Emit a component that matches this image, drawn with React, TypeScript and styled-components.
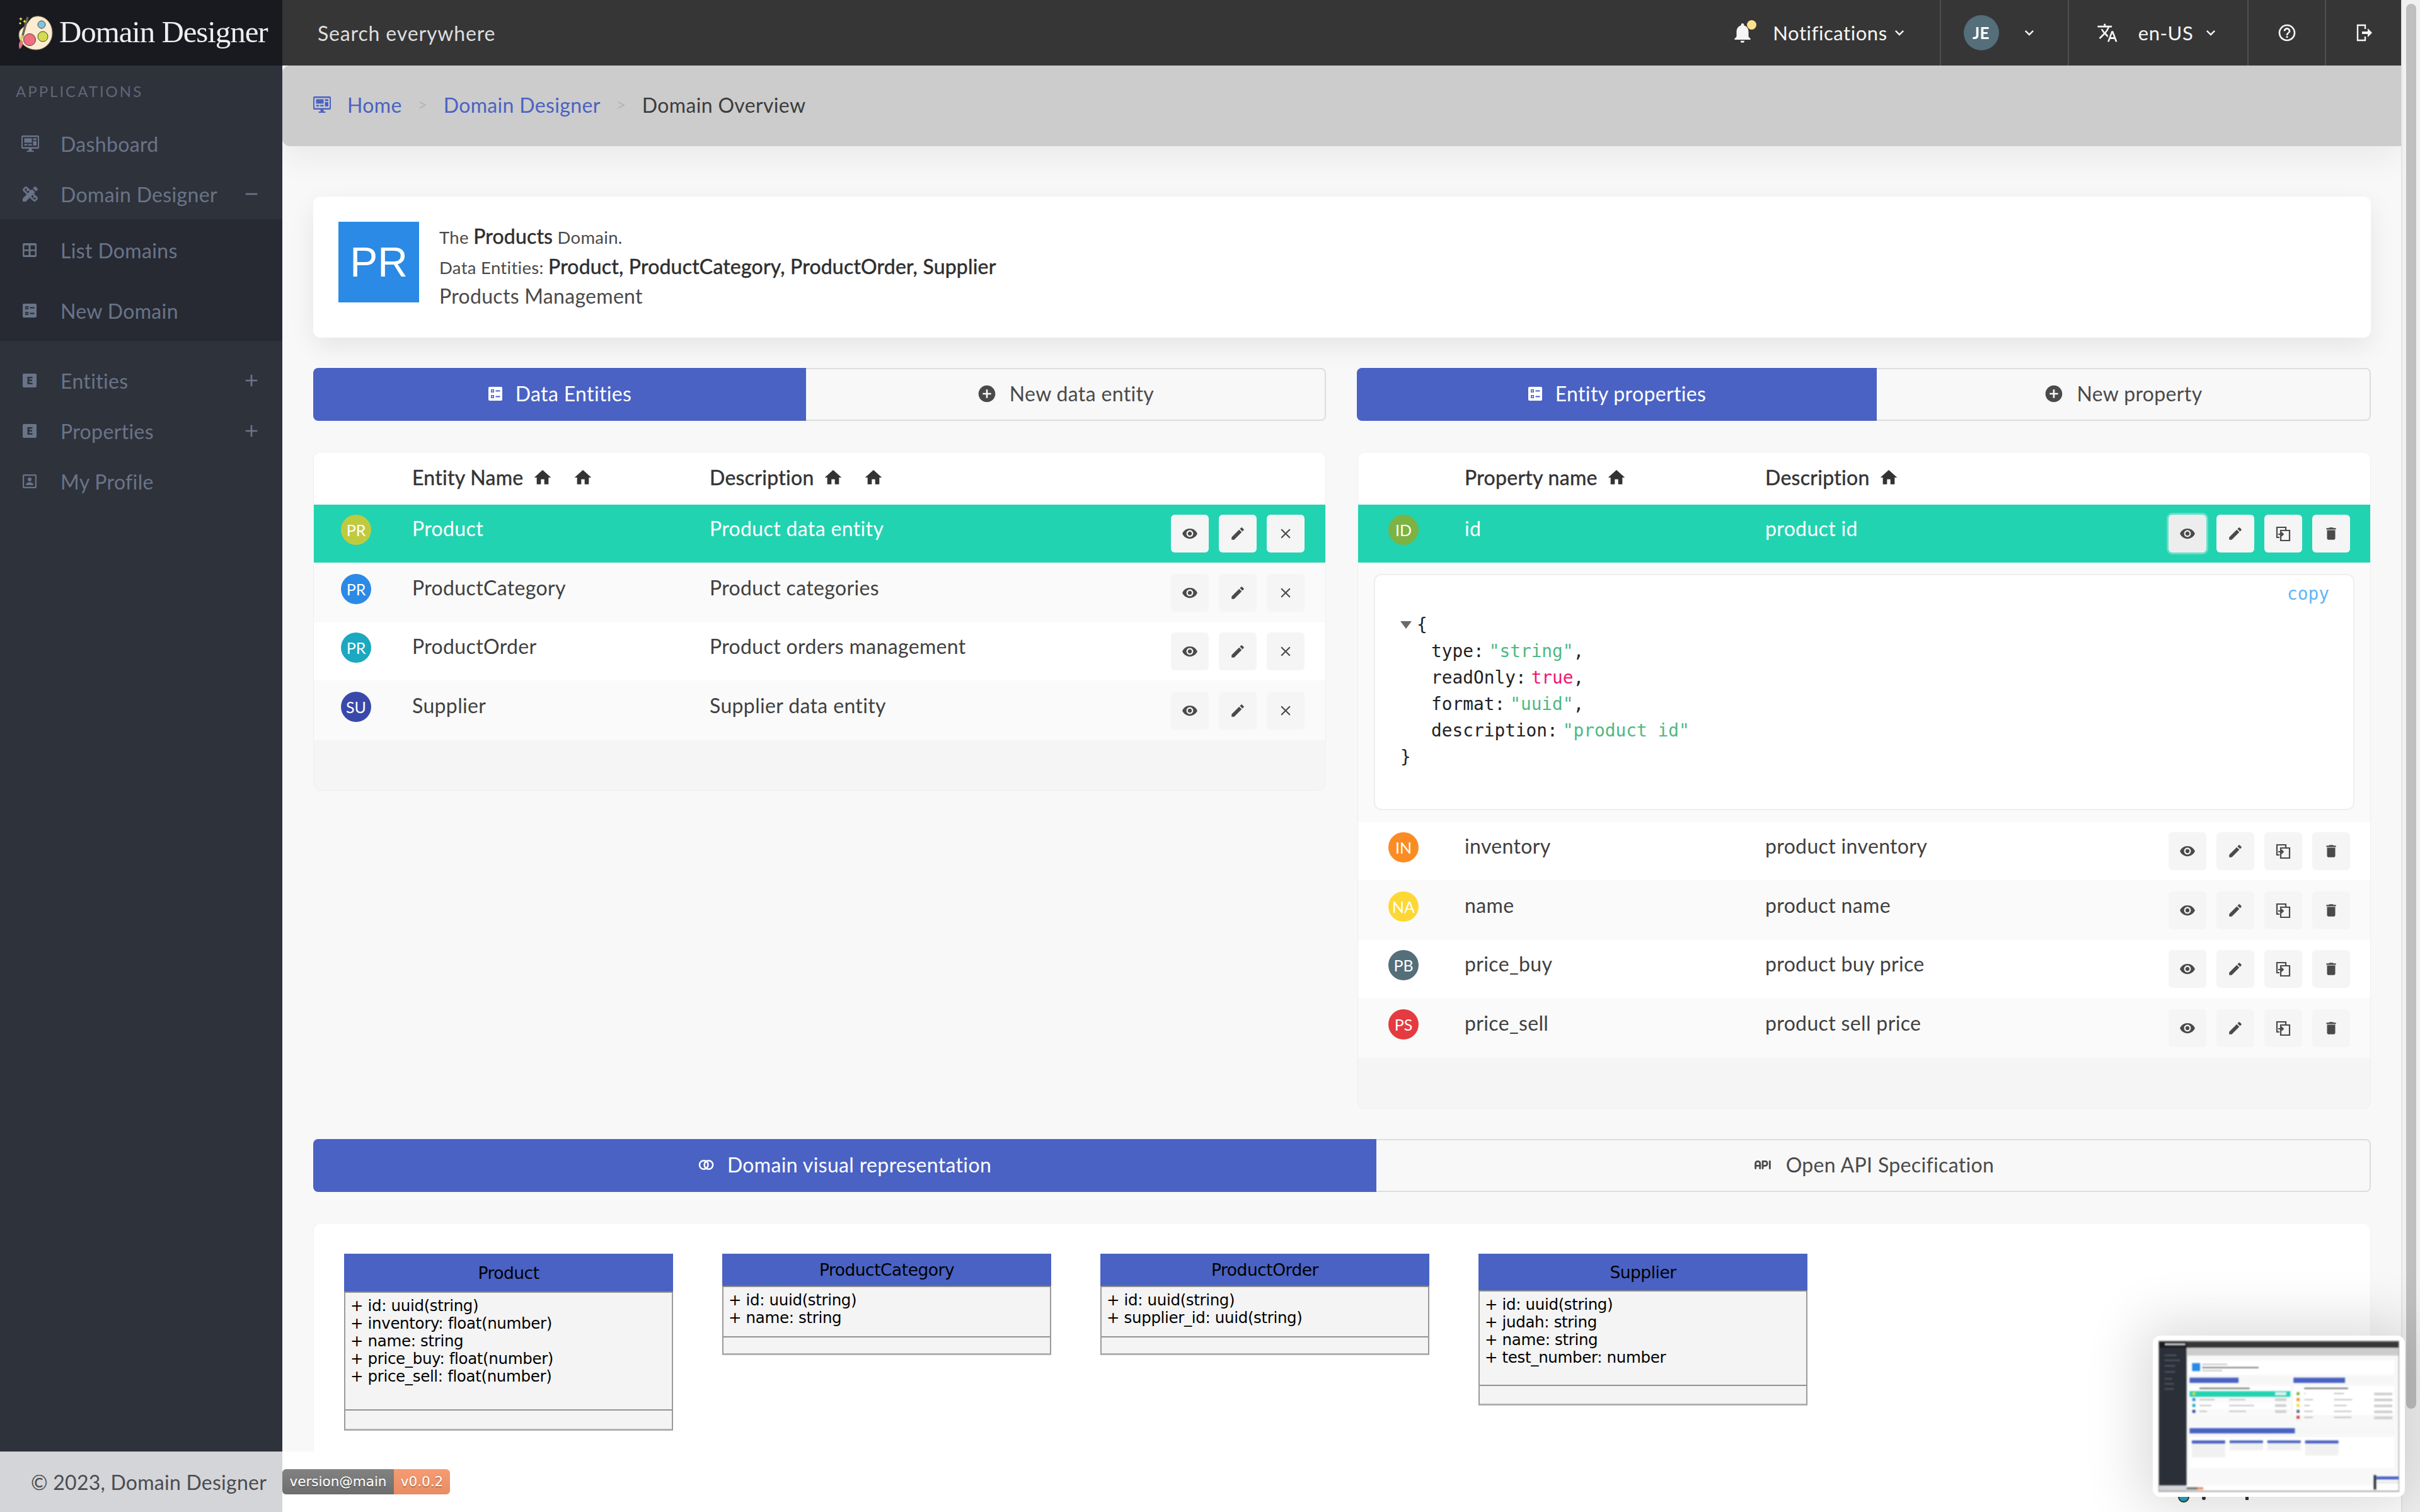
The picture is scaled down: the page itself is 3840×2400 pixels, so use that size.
import React from "react";
import styled, { createGlobalStyle } from "styled-components";
import {
  MdHome, MdEdit, MdClose, MdDelete, MdAddCircle, MdTranslate, MdNotifications,
  MdKeyboardArrowDown, MdHelpOutline, MdRemoveRedEye, MdAdd, MdRemove, MdDesignServices,
} from "react-icons/md";
import { TbApi } from "react-icons/tb";

const SANS = `"Lato", "Noto Sans", sans-serif`;
const BLUE = "#4a62c3";
const TEAL = "#22d3b1";

const Global = createGlobalStyle`
  html, body { margin: 0; padding: 0; background: #f8f8f8; }
  * { box-sizing: border-box; }
  body { font-family: ${SANS}; color: #3a3a3a; overflow: hidden; }
`;

const Page = styled.div`
  position: relative;
  width: 3840px;
  height: 2400px;
  overflow: hidden;
  display: grid;
  grid-template-columns: 448px 3362px 30px;
  grid-template-rows: 104px 2200px 96px;
`;

/* ---------- top bar ---------- */
const LogoBar = styled.div`
  background: #181a20;
  display: flex;
  align-items: center;
  padding-left: 27px;
`;
const LogoText = styled.span`
  font-family: "Liberation Serif", serif;
  font-size: 49px;
  letter-spacing: -1.1px;
  color: #eeeeee;
  margin-left: 9px;
  margin-top: -4px;
  white-space: nowrap;
`;
const TopBar = styled.header`
  background: #363636;
  display: flex;
  align-items: stretch;
  color: #fff;
`;
const SearchLabel = styled.div`
  flex: 1;
  padding-left: 56px;
  display: flex;
  align-items: center;
  font-size: 32px;
  letter-spacing: 0.85px;
  color: #dedede;
`;
const TopItem = styled.div<{ $w: number; $gap?: number; $divider?: boolean; $pr?: number }>`
  width: ${(p) => p.$w}px;
  padding-right: ${(p) => p.$pr ?? 0}px;
  display: flex;
  align-items: center;
  justify-content: center;
  gap: ${(p) => p.$gap ?? 0}px;
  font-size: 31px;
  letter-spacing: 0.55px;
  color: #f5f5f5;
  border-left: ${(p) => (p.$divider ? "2px solid #4f4f4f" : "none")};
`;
const BellWrap = styled.span`
  position: relative;
  display: inline-flex;
  font-size: 38px;
  margin-right: 9px;
`;
const BellDot = styled.span`
  position: absolute;
  right: -3px;
  top: -1px;
  width: 15px;
  height: 15px;
  border-radius: 50%;
  background: #ffdf8e;
`;
const TopGlyph = styled.span<{ $ml?: number; $mr?: number }>`
  display: flex;
  margin-left: ${(p) => p.$ml ?? 0}px;
  margin-right: ${(p) => p.$mr ?? 0}px;
`;
const UserChip = styled.span`
  width: 56px;
  height: 56px;
  border-radius: 50%;
  background: #546e7a;
  color: #fff;
  font-size: 26px;
  font-weight: 700;
  display: flex;
  align-items: center;
  justify-content: center;
`;

/* ---------- sidebar ---------- */
const Sidebar = styled.nav`
  background: #2e323b;
  display: flex;
  flex-direction: column;
  color: #6a7488;
`;
const SideLabel = styled.div`
  height: 84px;
  padding: 26px 0 0 25px;
  font-size: 24px;
  line-height: 30px;
  letter-spacing: 3px;
  color: #5f6777;
`;
const SideItem = styled.div<{ $h?: number; $mt?: number }>`
  height: ${(p) => p.$h ?? 80}px;
  margin-top: ${(p) => p.$mt ?? 0}px;
  display: grid;
  grid-template-columns: 96px 1fr 65px;
  align-items: center;
  font-size: 32px;
  letter-spacing: 0.35px;
  svg { display: block; }
`;
const SideIcon = styled.span<{ $pl?: number }>`
  padding-left: ${(p) => p.$pl ?? 35}px;
  display: flex;
`;
const SideGroup = styled.div`
  background: #272a33;
  border-top: 1px solid #272a33;
`;
const SideToggle = styled.span`
  font-size: 32px;
  display: flex;
`;
const SideFoot = styled.div`
  background: #d4d5d8;
  display: flex;
  align-items: center;
  padding: 0 0 0 49px;
  font-size: 32px;
  letter-spacing: 0.25px;
  color: #4a4c50;
  white-space: nowrap;
`;

/* ---------- main ---------- */
const Main = styled.main`
  overflow: hidden;
  background: #f8f8f8;
  display: flex;
  flex-direction: column;
`;
const Crumbs = styled.div`
  height: 128px;
  flex: none;
  background: #cccccc;
  border-radius: 12px 0 0 12px;
  box-shadow: 0 20px 50px rgba(0, 0, 0, 0.06);
  display: flex;
  align-items: center;
  padding: 0 0 4px 48px;
  font-size: 32px;
  letter-spacing: 0.35px;
  color: #3c3c3c;
`;
const CrumbIcon = styled.span`
  color: ${BLUE};
  display: flex;
  width: 55px;
`;
const CrumbLink = styled.span`
  color: ${BLUE};
`;
const CrumbSep = styled.span<{ $w: number }>`
  width: ${(p) => p.$w}px;
  text-align: center;
  color: #b5b5b5;
  font-size: 26px;
`;
const Content = styled.div`
  padding: 80px 48px 0 49px;
  display: flex;
  flex-direction: column;
`;
const DomainCard = styled.section`
  height: 224px;
  background: #fff;
  border-radius: 12px;
  box-shadow: 0 14px 40px rgba(0, 0, 0, 0.08);
  padding: 40px;
  display: flex;
  gap: 32px;
  margin-bottom: 48px;
`;
const DomainBadge = styled.div`
  width: 128px;
  height: 128px;
  flex: none;
  background: #2a8ae6;
  color: #fff;
  display: flex;
  align-items: center;
  justify-content: center;
  font-family: "Liberation Sans", sans-serif;
  font-size: 66px;
`;
const DomainLines = styled.div`
  display: flex;
  flex-direction: column;
  margin-top: -1px;
`;
const DomainLine = styled.div<{ $size: number }>`
  height: 47.5px;
  line-height: 47.5px;
  font-size: ${(p) => p.$size}px;
  letter-spacing: 0.3px;
  color: #4a4a4a;
  white-space: nowrap;
`;
const Strong = styled.b`
  font-size: 32px;
  font-weight: 400;
  letter-spacing: 0.2px;
  color: #2e2e2e;
  -webkit-text-stroke: 0.5px #2e2e2e;
`;
const Columns = styled.div`
  display: grid;
  grid-template-columns: 1607px 1609px;
  gap: 49px;
  align-items: start;
`;
const Tabs = styled.div<{ $cols: string; $mb?: number; $mt?: number }>`
  display: grid;
  grid-template-columns: ${(p) => p.$cols};
  height: 84px;
  margin-top: ${(p) => p.$mt ?? 0}px;
  margin-bottom: ${(p) => p.$mb ?? 49}px;
`;
const Tab = styled.div<{ $active?: boolean }>`
  display: flex;
  align-items: center;
  justify-content: center;
  gap: 20px;
  padding-bottom: 3px;
  font-size: 32px;
  letter-spacing: 0.35px;
  color: ${(p) => (p.$active ? "#fff" : "#4a4a4a")};
  background: ${(p) => (p.$active ? BLUE : "#f8f8f8")};
  border-radius: ${(p) => (p.$active ? "8px 0 0 8px" : "0 8px 8px 0")};
  border: ${(p) => (p.$active ? "none" : "2px solid #dddddd")};
  border-left: none;
  svg { display: block; }
`;
const TableCard = styled.section<{ $h: number; $ml?: number }>`
  height: ${(p) => p.$h}px;
  margin-left: ${(p) => p.$ml ?? 0}px;
  background: #f5f5f5;
  border: 1px solid #efefef;
  border-radius: 12px;
  overflow: hidden;
`;
const HeadRow = styled.div<{ $cols: string }>`
  height: 83px;
  padding-bottom: 4px;
  background: #fff;
  display: grid;
  grid-template-columns: ${(p) => p.$cols};
  align-items: center;
  font-size: 32px;
  letter-spacing: 0.3px;
  color: #333333;
  -webkit-text-stroke: 0.45px #333333;
`;
const HeadCell = styled.div`
  display: flex;
  align-items: center;
  white-space: nowrap;
  svg { margin-left: 14px; }
  svg + svg { margin-left: 32px; }
`;
const Row = styled.div<{ $cols: string; $selected?: boolean; $striped?: boolean; $pr: number }>`
  height: ${(p) => (p.$striped ? 95 : 92)}px;
  padding: ${(p) => (p.$striped ? 18 : 16)}px ${(p) => p.$pr}px 0 0;
  display: grid;
  grid-template-columns: ${(p) => p.$cols};
  align-items: start;
  font-size: 32px;
  line-height: 44px;
  letter-spacing: 0.35px;
  background: ${(p) => (p.$selected ? TEAL : p.$striped ? "#fafafa" : "#fff")};
  color: ${(p) => (p.$selected ? "#fff" : "#404040")};
`;
const Avatar = styled.span<{ $bg: string; $ml: number }>`
  width: 48px;
  height: 48px;
  margin-left: ${(p) => p.$ml}px;
  border-radius: 50%;
  background: ${(p) => p.$bg};
  color: #fff;
  font-size: 25px;
  font-weight: 400;
  letter-spacing: 0;
  display: flex;
  align-items: center;
  justify-content: center;
`;
const Actions = styled.div`
  display: flex;
  gap: 16px;
`;
const ActionBtn = styled.span<{ $focus?: boolean }>`
  width: 60px;
  height: 60px;
  border-radius: 6px;
  background: ${(p) => (p.$focus ? "#ededed" : "#f5f5f5")};
  box-shadow: ${(p) => (p.$focus ? "0 0 0 3px rgba(255,255,255,.3)" : "none")};
  color: #4a4a4a;
  display: flex;
  align-items: center;
  justify-content: center;
  font-size: 26px;
`;
const Detail = styled.div`
  height: 412px;
  background: #fafafa;
  border-top: 2px solid #fff;
  padding: 16px 25px 0 25px;
`;
const CodeCard = styled.div`
  height: 375px;
  background: #fff;
  border: 2px solid #eeeeee;
  border-radius: 12px;
  padding: 9px 38px 0 40px;
  font-family: "DejaVu Sans Mono", monospace;
  font-size: 27.8px;
  line-height: 42px;
  color: #222;
`;
const CopyLink = styled.div`
  text-align: right;
  color: #5fb6f7;
  height: 49px;
`;
const CodeLine = styled.div<{ $indent?: boolean }>`
  padding-left: ${(p) => (p.$indent ? 49 : 0)}px;
  white-space: pre;
  display: flex;
  align-items: center;
`;
const Caret = styled.span`
  width: 0;
  height: 0;
  border-left: 9px solid transparent;
  border-right: 9px solid transparent;
  border-top: 12px solid #6a6a6a;
  margin-right: 8px;
`;
const Key = styled.span`
  margin-right: 8px;
`;
const Str = styled.span`
  color: #4fb884;
`;
const Bool = styled.span`
  color: #f2166f;
`;

/* ---------- UML ---------- */
const DiagramCard = styled.section`
  background: #fff;
  border: 1px solid #f2f2f2;
  border-radius: 12px 12px 0 0;
  height: 420px;
  padding: 48px 48px 0 48px;
  display: flex;
  gap: 78px;
  align-items: flex-start;
`;
const UmlBox = styled.div`
  width: 522px;
  flex: none;
  border: 2px solid #9a9a9a;
  border-bottom-width: 3px;
  border-bottom-color: #b0b0b0;
  background: #f4f4f4;
  color: #000;
  font-family: "DejaVu Sans", sans-serif;
`;
const UmlHead = styled.div<{ $h: number }>`
  height: ${(p) => p.$h}px;
  background: ${BLUE};
  border-bottom: 2px solid #8e8e8e;
  margin: -2px -2px 0 -2px;
  display: flex;
  align-items: center;
  justify-content: center;
  font-size: 26.5px;
  letter-spacing: -0.5px;
`;
const UmlBody = styled.div<{ $h: number }>`
  height: ${(p) => p.$h}px;
  padding: 7px 0 0 8px;
  border-bottom: 2px solid #929292;
  font-size: 24.5px;
  line-height: 28px;
  letter-spacing: -0.35px;
`;
const UmlFoot = styled.div<{ $h: number }>`
  height: ${(p) => p.$h}px;
`;

/* ---------- footer / overlays ---------- */
const MainFoot = styled.div`
  background: #fff;
  display: flex;
  align-items: center;
`;
const Badge = styled.div`
  display: flex;
  height: 40px;
  font-family: "DejaVu Sans", sans-serif;
  font-size: 21.5px;
  line-height: 40px;
  color: #fff;
  text-shadow: 0 2px 1px rgba(0, 0, 0, 0.25);
  border-radius: 6px;
  overflow: hidden;
`;
const BadgeLeft = styled.span`
  width: 177px;
  text-align: center;
  background: linear-gradient(#828282, #6d6d6d);
`;
const BadgeRight = styled.span`
  width: 89px;
  text-align: center;
  background: linear-gradient(#f69b72, #e88c63);
`;
const ScrollTrack = styled.div`
  grid-column: 3;
  grid-row: 1 / 4;
  background: #f1f1f1;
  border-left: 2px solid #e4e4e4;
  padding: 6px 6px 0 6px;
`;
const ScrollThumb = styled.div`
  height: 2230px;
  background: #bfbfbf;
  border-radius: 8px;
`;
const MiniMap = styled.div`
  position: absolute;
  left: 3416px;
  top: 2120px;
  width: 400px;
  height: 256px;
  background: #fff;
  border-radius: 12px;
  padding: 8px 9px;
  box-shadow: 0 0 90px 20px rgba(0, 0, 0, 0.14);
  svg { display: block; filter: blur(1.1px); }
`;
const MiniPeek = styled.svg`
  position: absolute;
  left: 3450px;
  top: 2376px;
`;

/* ---------- icons ---------- */
const LogoMark = () => (
  <svg width="58" height="60" viewBox="0 0 58 60">
    <path d="M30 4c14-2 26 10 26 26S44 57 30 57 3 46 3 33C3 25 9 22 13 19c5-4 7-14 17-15z" fill="#fdeccf" stroke="#8c7a5c" strokeWidth="1" />
    <circle cx="39" cy="17" r="6" fill="#7cc4e6" stroke="#444" strokeWidth="1" />
    <circle cx="41" cy="36" r="8" fill="#d2dc4c" stroke="#444" strokeWidth="1" />
    <circle cx="20" cy="41" r="9.5" fill="#f26d80" stroke="#444" strokeWidth="1" />
    <path d="M17 5L8 38" stroke="#6b6358" strokeWidth="3.5" />
    <path d="M8 34l-1.5 8" stroke="#d2dc4c" strokeWidth="4" />
    <path d="M6 42c-3 3-4 8-2 14 4-3 6-8 5-13z" fill="#e8707f" />
    <path d="M6 5l1 2 2 1-2 1-1 2-1-2-2-1 2-1zM12 9l1 2 2 1-2 1-1 2-1-2-2-1 2-1zM5 13l1 1 1 1-1 1-1 1-1-1-1-1 1-1z" fill="#e6dc4a" />
  </svg>
);
const IconMonitor = ({ size = 30 }: { size?: number }) => (
  <svg width={size} height={size} viewBox="0 0 30 30" fill="currentColor">
    <path fillRule="evenodd" d="M3 2h24a2 2 0 0 1 2 2v17a2 2 0 0 1-2 2H3a2 2 0 0 1-2-2V4a2 2 0 0 1 2-2zm0 2.4V20.6h24V4.4z" />
    <rect x="5.5" y="6.5" width="12" height="7" />
    <rect x="19.5" y="6.5" width="5.5" height="3" />
    <rect x="19.5" y="11" width="5.5" height="7" />
    <rect x="5.5" y="15.5" width="5" height="2.5" />
    <rect x="12" y="15.5" width="5.500" height="2.5" />
    <rect x="12.5" y="23" width="5" height="3" />
    <rect x="9.5" y="26" width="11" height="2" />
  </svg>
);
const IconGrid = ({ size = 24 }: { size?: number }) => (
  <svg width={size} height={size} viewBox="0 0 24 24" fill="currentColor">
    <path fillRule="evenodd" d="M3 1h18a2 2 0 0 1 2 2v18a2 2 0 0 1-2 2H3a2 2 0 0 1-2-2V3a2 2 0 0 1 2-2zm.5 3.500v6.500h7V4.500zm10 0v6.500h7V4.500zm-10 9v6.500h7V13.500zm10 0v6.500h7V13.500z" />
  </svg>
);
const IconForm = ({ size = 24 }: { size?: number }) => (
  <svg width={size} height={size} viewBox="0 0 24 24" fill="currentColor">
    <path fillRule="evenodd" d="M3 1h18a2 2 0 0 1 2 2v18a2 2 0 0 1-2 2H3a2 2 0 0 1-2-2V3a2 2 0 0 1 2-2zm2 4v5h5V5zm1.500 1.500h2v2h-2zM5 14v5h5v-5zm1.500 1.500h2v2h-2zM12.500 6.500v2h7v-2zm0 9v2h7v-2z" />
  </svg>
);
const IconEntity = () => (
  <svg width="24" height="24" viewBox="0 0 24 24" fill="currentColor">
    <path fillRule="evenodd" d="M3 1h18a2 2 0 0 1 2 2v18a2 2 0 0 1-2 2H3a2 2 0 0 1-2-2V3a2 2 0 0 1 2-2zm5.500 5v12h8v-2.500H11.500V13h4.500v-2.500H11.500V8.500h5V6z" />
  </svg>
);
const IconProfile = () => (
  <svg width="24" height="24" viewBox="0 0 24 24" fill="currentColor">
    <path fillRule="evenodd" d="M3 1h18a2 2 0 0 1 2 2v18a2 2 0 0 1-2 2H3a2 2 0 0 1-2-2V3a2 2 0 0 1 2-2zm.2 2.200v17.600h17.600V3.200z" />
    <circle cx="12" cy="9" r="3" />
    <path d="M6 18c0-3 3-4.500 6-4.500s6 1.500 6 4.500z" />
  </svg>
);
const IconLogout = () => (
  <svg width="30" height="30" viewBox="0 0 30 30" fill="none" stroke="currentColor" strokeWidth="2.4">
    <path d="M17 9V3H5v24h12v-6" />
    <path d="M12 13h9V8l7 7-7 7v-5h-9z" fill="currentColor" stroke="none" />
  </svg>
);
const IconRings = () => (
  <svg width="26" height="22" viewBox="0 0 30 26" fill="none" stroke="currentColor" strokeWidth="3">
    <circle cx="10" cy="13" r="8" />
    <circle cx="19" cy="13" r="8" />
  </svg>
);
const IconCopy = () => (
  <svg width="26" height="26" viewBox="0 0 26 26" fill="none" stroke="currentColor" strokeWidth="2.2">
    <path d="M7 19H3V3h14v5" />
    <path d="M9 8h14v16H9z" />
    <path d="M5 14h8m-3-3l3 3-3 3" strokeWidth="1.8" />
  </svg>
);

const homeIcon = <MdHome size={32} />;

/* ---------- data ---------- */
const LEFT_COLS = "156px 472px 1fr auto";
const RIGHT_COLS = "169px 477px 1fr auto";

const entities = [
  { code: "PR", bg: "#c0ca3f", name: "Product", desc: "Product data entity", selected: true },
  { code: "PR", bg: "#2a8ae6", name: "ProductCategory", desc: "Product categories", striped: true },
  { code: "PR", bg: "#1ca8c0", name: "ProductOrder", desc: "Product orders management" },
  { code: "SU", bg: "#3949ab", name: "Supplier", desc: "Supplier data entity", striped: true },
];
const props = [
  { code: "IN", bg: "#fb8c24", name: "inventory", desc: "product inventory" },
  { code: "NA", bg: "#fdd835", name: "name", desc: "product name", striped: true },
  { code: "PB", bg: "#546e7a", name: "price_buy", desc: "product buy price" },
  { code: "PS", bg: "#e53a3f", name: "price_sell", desc: "product sell price", striped: true },
];
const uml = [
  { title: "Product", head: 62, body: 187, foot: 29, lines: ["+ id: uuid(string)", "+ inventory: float(number)", "+ name: string", "+ price_buy: float(number)", "+ price_sell: float(number)"] },
  { title: "ProductCategory", head: 53, body: 80, foot: 25, lines: ["+ id: uuid(string)", "+ name: string"] },
  { title: "ProductOrder", head: 53, body: 80, foot: 25, lines: ["+ id: uuid(string)", "+ supplier_id: uuid(string)"] },
  { title: "Supplier", head: 60, body: 150, foot: 28, lines: ["+ id: uuid(string)", "+ judah: string", "+ name: string", "+ test_number: number"] },
];

/* miniature page, a drawing: [x, y, w, h, colour] in page coordinates */
const miniRects: [number, number, number, number, string][] = [
  [0, 0, 3840, 2400, "#f8f8f8"],
  [0, 0, 3840, 104, "#363636"],
  [0, 0, 448, 104, "#181a20"],
  [0, 104, 448, 2200, "#2b2f38"],
  [448, 104, 3392, 128, "#cccccc"],
  [496, 312, 3266, 224, "#ffffff"],
  [536, 352, 128, 128, "#2a8ae6"],
  [696, 365, 400, 14, "#aaaaaa"], [696, 415, 900, 16, "#555555"], [696, 465, 320, 14, "#aaaaaa"],
  [496, 584, 782, 84, BLUE], [1278, 584, 826, 84, "#f6f6f6"],
  [2153, 584, 825, 84, BLUE], [2978, 584, 784, 84, "#f6f6f6"],
  [496, 717, 1608, 460, "#ffffff"], [2153, 717, 1608, 460, "#ffffff"],
  [496, 800, 1608, 92, TEAL],
  [654, 745, 800, 20, "#666666"], [2324, 745, 700, 20, "#666666"],
  [496, 892, 1608, 96, "#fafafa"], [496, 1080, 1608, 96, "#fafafa"],
  [541, 816, 48, 48, "#dcd84a"], [541, 910, 48, 48, "#2a8ae6"], [541, 1004, 48, 48, "#1ca8c0"], [541, 1098, 48, 48, "#3949ab"],
  [2203, 816, 48, 48, "#7cb342"], [2203, 910, 48, 48, "#fb8c24"], [2203, 1004, 48, 48, "#fdd835"], [2203, 1098, 48, 48, "#546e7a"], [2203, 1192, 48, 48, "#e53a3f"],
  [654, 928, 240, 14, "#aaaaaa"], [654, 1022, 190, 14, "#aaaaaa"], [654, 1116, 120, 14, "#aaaaaa"],
  [1126, 928, 260, 14, "#aaaaaa"], [1126, 1022, 400, 14, "#aaaaaa"], [1126, 1116, 270, 14, "#aaaaaa"],
  [1860, 815, 180, 50, "#f0f0f0"], [1860, 915, 180, 40, "#cccccc"], [1860, 1010, 180, 40, "#cccccc"], [1860, 1105, 180, 40, "#cccccc"],
  [2324, 830, 20, 14, "#aaaaaa"], [2324, 928, 140, 14, "#aaaaaa"], [2324, 1022, 90, 14, "#aaaaaa"], [2324, 1116, 140, 14, "#aaaaaa"], [2324, 1210, 140, 14, "#aaaaaa"],
  [2800, 830, 160, 14, "#aaaaaa"], [2800, 928, 290, 14, "#aaaaaa"], [2800, 1022, 200, 14, "#aaaaaa"], [2800, 1116, 280, 14, "#aaaaaa"], [2800, 1210, 280, 14, "#aaaaaa"],
  [3440, 825, 290, 40, "#cccccc"], [3440, 920, 290, 40, "#cccccc"], [3440, 1015, 290, 40, "#cccccc"], [3440, 1110, 290, 40, "#cccccc"], [3440, 1205, 290, 40, "#cccccc"],
  [496, 1390, 1682, 84, BLUE], [2178, 1390, 1584, 84, "#f6f6f6"],
  [496, 1536, 3266, 494, "#ffffff"],
  [532, 1586, 532, 270, "#f1f1f1"], [532, 1586, 532, 50, BLUE],
  [1135, 1586, 531, 160, "#f1f1f1"], [1135, 1586, 531, 42, BLUE],
  [1737, 1586, 532, 160, "#f1f1f1"], [1737, 1586, 532, 42, BLUE],
  [2339, 1586, 532, 240, "#f1f1f1"], [2339, 1586, 532, 48, BLUE],
  [0, 2304, 448, 96, "#d4d5d8"], [448, 2304, 3392, 96, "#ffffff"],
  [448, 2332, 177, 40, "#777777"], [625, 2332, 89, 40, "#ee9068"],
  [3433, 2138, 407, 232, "#ffffff"], [3433, 2138, 40, 232, "#2b2f38"], [3473, 2160, 367, 50, BLUE], [3473, 2240, 367, 30, "#e6e6e6"],
];
const sideBars: [number, number][] = [[228, 190], [308, 250], [396, 170], [492, 170], [603, 120], [683, 150], [764, 150]];

const Actionset = ({ withCopy, focusFirst }: { withCopy?: boolean; focusFirst?: boolean }) => (
  <Actions>
    <ActionBtn $focus={focusFirst}><MdRemoveRedEye /></ActionBtn>
    <ActionBtn><MdEdit /></ActionBtn>
    {withCopy && <ActionBtn><IconCopy /></ActionBtn>}
    <ActionBtn>{withCopy ? <MdDelete /> : <MdClose />}</ActionBtn>
  </Actions>
);

export default function App() {
  return (
    <Page>
      <Global />
      <LogoBar>
        <LogoMark />
        <LogoText>Domain Designer</LogoText>
      </LogoBar>
      <TopBar>
        <SearchLabel>Search everywhere</SearchLabel>
        <TopItem $w={338} $gap={20} $pr={44}>
          <BellWrap><MdNotifications /><BellDot /></BellWrap>
          Notifications
          <TopGlyph $ml={-15}><MdKeyboardArrowDown size={28} /></TopGlyph>
        </TopItem>
        <TopItem $w={203} $gap={34} $pr={12} $divider>
          <UserChip>JE</UserChip>
          <MdKeyboardArrowDown size={28} />
        </TopItem>
        <TopItem $w={285} $gap={20} $divider>
          <TopGlyph $mr={12}><MdTranslate size={34} /></TopGlyph>
          en-US
          <TopGlyph $ml={-6}><MdKeyboardArrowDown size={28} /></TopGlyph>
        </TopItem>
        <TopItem $w={123} $divider><MdHelpOutline size={32} /></TopItem>
        <TopItem $w={121} $divider><IconLogout /></TopItem>
      </TopBar>

      <Sidebar>
        <SideLabel>APPLICATIONS</SideLabel>
        <SideItem><SideIcon $pl={33}><IconMonitor /></SideIcon>Dashboard</SideItem>
        <SideItem><SideIcon $pl={32}><MdDesignServices size={32} /></SideIcon>Domain Designer<SideToggle><MdRemove /></SideToggle></SideItem>
        <SideGroup>
          <SideItem $h={96}><SideIcon><IconGrid /></SideIcon>List Domains</SideItem>
          <SideItem $h={96}><SideIcon><IconForm /></SideIcon>New Domain</SideItem>
        </SideGroup>
        <SideItem $mt={23}><SideIcon><IconEntity /></SideIcon>Entities<SideToggle><MdAdd /></SideToggle></SideItem>
        <SideItem><SideIcon><IconEntity /></SideIcon>Properties<SideToggle><MdAdd /></SideToggle></SideItem>
        <SideItem><SideIcon><IconProfile /></SideIcon>My Profile</SideItem>
      </Sidebar>

      <Main>
        <Crumbs>
          <CrumbIcon><IconMonitor /></CrumbIcon>
          <CrumbLink>Home</CrumbLink>
          <CrumbSep $w={66}>&gt;</CrumbSep>
          <CrumbLink>Domain Designer</CrumbLink>
          <CrumbSep $w={66}>&gt;</CrumbSep>
          Domain Overview
        </Crumbs>
        <Content>
          <DomainCard>
            <DomainBadge>PR</DomainBadge>
            <DomainLines>
              <DomainLine $size={27.5}>The <Strong>Products</Strong> Domain.</DomainLine>
              <DomainLine $size={27.5}>Data Entities: <Strong>Product, ProductCategory, ProductOrder, Supplier</Strong></DomainLine>
              <DomainLine $size={32}>Products Management</DomainLine>
            </DomainLines>
          </DomainCard>
          <Columns>
            <div>
              <Tabs $cols="782px 825px">
                <Tab $active><IconForm size={24} />Data Entities</Tab>
                <Tab><MdAddCircle size={32} />New data entity</Tab>
              </Tabs>
              <TableCard $h={538}>
                <HeadRow $cols={LEFT_COLS}>
                  <span />
                  <HeadCell>Entity Name{homeIcon}{homeIcon}</HeadCell>
                  <HeadCell>Description{homeIcon}{homeIcon}</HeadCell>
                </HeadRow>
                {entities.map((e) => (
                  <Row key={e.name} $cols={LEFT_COLS} $selected={e.selected} $striped={e.striped} $pr={33}>
                    <Avatar $bg={e.bg} $ml={43}>{e.code}</Avatar>
                    <span>{e.name}</span>
                    <span>{e.desc}</span>
                    <Actionset />
                  </Row>
                ))}
              </TableCard>
            </div>
            <div>
              <Tabs $cols="825px 784px">
                <Tab $active><IconForm size={24} />Entity properties</Tab>
                <Tab><MdAddCircle size={32} />New property</Tab>
              </Tabs>
              <TableCard $h={1043} $ml={1}>
                <HeadRow $cols={RIGHT_COLS}>
                  <span />
                  <HeadCell>Property name{homeIcon}</HeadCell>
                  <HeadCell>Description{homeIcon}</HeadCell>
                </HeadRow>
                <Row $cols={RIGHT_COLS} $selected $pr={32}>
                  <Avatar $bg="#7cb342" $ml={48}>ID</Avatar>
                  <span>id</span>
                  <span>product id</span>
                  <Actionset withCopy focusFirst />
                </Row>
                <Detail>
                  <CodeCard>
                    <CopyLink>copy</CopyLink>
                    <CodeLine><Caret />{"{"}</CodeLine>
                    <CodeLine $indent><Key>type:</Key><Str>"string"</Str>,</CodeLine>
                    <CodeLine $indent><Key>readOnly:</Key><Bool>true</Bool>,</CodeLine>
                    <CodeLine $indent><Key>format:</Key><Str>"uuid"</Str>,</CodeLine>
                    <CodeLine $indent><Key>description:</Key><Str>"product id"</Str></CodeLine>
                    <CodeLine>{"}"}</CodeLine>
                  </CodeCard>
                </Detail>
                {props.map((e) => (
                  <Row key={e.name} $cols={RIGHT_COLS} $striped={e.striped} $pr={32}>
                    <Avatar $bg={e.bg} $ml={48}>{e.code}</Avatar>
                    <span>{e.name}</span>
                    <span>{e.desc}</span>
                    <Actionset withCopy />
                  </Row>
                ))}
              </TableCard>
            </div>
          </Columns>
          <Tabs $cols="1687px 1578px" $mt={48}>
            <Tab $active><IconRings />Domain visual representation</Tab>
            <Tab><TbApi size={34} />Open API Specification</Tab>
          </Tabs>
          <DiagramCard>
            {uml.map((u) => (
              <UmlBox key={u.title}>
                <UmlHead $h={u.head}>{u.title}</UmlHead>
                <UmlBody $h={u.body}>
                  {u.lines.map((l) => <div key={l}>{l}</div>)}
                </UmlBody>
                <UmlFoot $h={u.foot} />
              </UmlBox>
            ))}
          </DiagramCard>
        </Content>
      </Main>

      <ScrollTrack><ScrollThumb /></ScrollTrack>

      <SideFoot>© 2023, Domain Designer</SideFoot>
      <MainFoot>
        <Badge>
          <BadgeLeft>version@main</BadgeLeft>
          <BadgeRight>v0.0.2</BadgeRight>
        </Badge>
      </MainFoot>

      <MiniPeek width="130" height="10" viewBox="0 0 130 10">
        <circle cx="15" cy="0" r="8" fill="#1ca8c0" stroke="#333" strokeWidth="2" />
        <circle cx="47" cy="2" r="3" fill="#333" />
        <rect x="113" y="0" width="5" height="5" fill="#333" />
      </MiniPeek>
      <MiniMap>
        <svg width="382" height="240" viewBox="0 0 3840 2400">
          {miniRects.map(([x, y, w, h, c], i) => <rect key={i} x={x} y={y} width={w} height={h} fill={c} />)}
          {sideBars.map(([y, w]) => <rect key={y} x={97} y={y - 8} width={w} height={16} fill="#5c6575" />)}
          <rect x="100" y="35" width="330" height="34" fill="#cccccc" />
          <rect x="1" y="1" width="3838" height="2398" fill="none" stroke="#999" strokeWidth="20" />
        </svg>
      </MiniMap>
    </Page>
  );
}
